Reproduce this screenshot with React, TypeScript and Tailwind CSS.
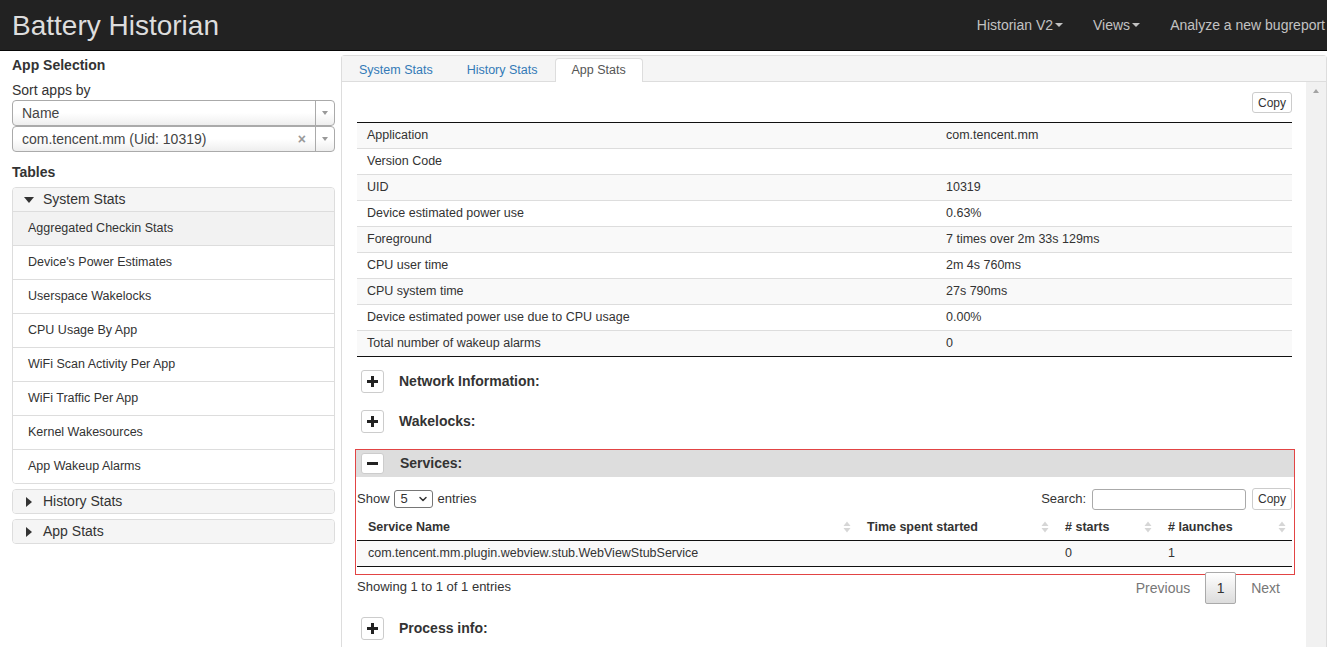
import { ChevronDown } from "lucide-react";

const appRows: [string, string][] = [
  ["Application", "com.tencent.mm"],
  ["Version Code", ""],
  ["UID", "10319"],
  ["Device estimated power use", "0.63%"],
  ["Foreground", "7 times over 2m 33s 129ms"],
  ["CPU user time", "2m 4s 760ms"],
  ["CPU system time", "27s 790ms"],
  ["Device estimated power use due to CPU usage", "0.00%"],
  ["Total number of wakeup alarms", "0"],
];

const systemTables = [
  "Aggregated Checkin Stats",
  "Device's Power Estimates",
  "Userspace Wakelocks",
  "CPU Usage By App",
  "WiFi Scan Activity Per App",
  "WiFi Traffic Per App",
  "Kernel Wakesources",
  "App Wakeup Alarms",
];

function Caret() {
  return (
    <span className="ml-[2px] inline-block h-0 w-0 border-x-[4px] border-t-[4px] border-b-0 border-x-transparent border-t-[#c2c2c2]" />
  );
}

function SortIcon() {
  return (
    <svg width="8" height="14" viewBox="0 0 8 14" className="shrink-0">
      <path d="M4 1.5 L7.5 6 L0.5 6 Z" fill="#d6d6d6" />
      <path d="M4 12.5 L7.5 8 L0.5 8 Z" fill="#d6d6d6" />
    </svg>
  );
}

function SelectBox({ value, clear }: { value: string; clear?: boolean }) {
  return (
    <div className="flex h-[26px] items-stretch rounded-[4px] border border-[#aaa] bg-linear-to-b from-white from-50% to-[#eeeeee] text-[14px]">
      <div className="flex flex-1 items-center pl-[9px] text-[#444]">{value}</div>
      {clear && (
        <div className="flex items-center pr-[9px] text-[14px] font-bold text-[#999]">×</div>
      )}
      <div className="flex w-[19px] items-center justify-center border-l border-[#aaa]">
        <span className="h-0 w-0 border-x-[3.5px] border-t-[4px] border-b-0 border-x-transparent border-t-[#999]" />
      </div>
    </div>
  );
}

function ToggleButton({ open, short }: { open?: boolean; short?: boolean }) {
  return (
    <div
      className={`flex w-[23px] shrink-0 items-center justify-center rounded-[3px] border border-[#ccc] bg-white ${
        short ? "h-[21px]" : "h-[23px]"
      }`}
    >
      <svg width="11" height="11" viewBox="0 0 11 11">
        <rect x="0" y="4" width="11" height="3" fill="#222" />
        {!open && <rect x="4" y="0" width="3" height="11" fill="#222" />}
      </svg>
    </div>
  );
}

function SidePanelHeader({ label, open }: { label: string; open?: boolean }) {
  return (
    <div className="flex h-[23px] items-center gap-[9px] bg-[#f5f5f5] pl-[11px] text-[14px]">
      <span className="flex w-[10px] justify-center">
        {open ? (
          <span className="h-0 w-0 border-x-[5px] border-t-[6px] border-b-0 border-x-transparent border-t-[#333]" />
        ) : (
          <span className="h-0 w-0 border-y-[5px] border-l-[6px] border-r-0 border-y-transparent border-l-[#333]" />
        )}
      </span>
      {label}
    </div>
  );
}

export default function App() {
  return (
    <div className="h-[647px] w-full overflow-hidden bg-white font-['Liberation_Sans',Arial,sans-serif] text-[#333]">
      {/* Navbar */}
      <nav className="flex h-[51px] items-center overflow-hidden border-b border-[#080808] bg-[#222]">
        <div className="pl-3 pt-[2px] text-[28px] leading-none text-[#dddddd]">Battery Historian</div>
        <ul className="-mr-[13px] ml-auto flex shrink-0 text-[14px] text-[#c2c2c2]">
          <li className="flex items-center px-[15px]">
            Historian V2
            <Caret />
          </li>
          <li className="flex items-center px-[15px]">
            Views
            <Caret />
          </li>
          <li className="flex items-center px-[15px]">Analyze a new bugreport</li>
        </ul>
      </nav>

      <div className="flex h-[596px]">
        {/* Sidebar */}
        <aside className="w-[341px] shrink-0 pl-3 pr-[6px] pt-1">
          <div className="text-[14px] font-bold leading-[20px]">App Selection</div>
          <div className="mt-[5px] text-[14px] leading-[20px]">Sort apps by</div>
          <SelectBox value="Name" />
          <SelectBox value="com.tencent.mm (Uid: 10319)" clear />
          <div className="mt-[10px] text-[14px] font-bold leading-[20px]">Tables</div>

          <div className="mt-[5px] overflow-hidden rounded-[4px] border border-[#ddd]">
            <SidePanelHeader label="System Stats" open />
            {systemTables.map((t, i) => (
              <div
                key={t}
                className={`flex h-[34px] items-center border-t border-[#ddd] pl-[15px] text-[12.5px] ${
                  i === 0 ? "bg-[#f2f2f2]" : "bg-white"
                }`}
              >
                {t}
              </div>
            ))}
          </div>
          <div className="mt-[5px] overflow-hidden rounded-[4px] border border-[#ddd]">
            <SidePanelHeader label="History Stats" />
          </div>
          <div className="mt-[5px] overflow-hidden rounded-[4px] border border-[#ddd]">
            <SidePanelHeader label="App Stats" />
          </div>
        </aside>

        {/* Main panel */}
        <main className="mt-1 flex min-w-0 flex-1 flex-col rounded-t-[4px] border border-b-0 border-[#ddd]">
          <div className="flex h-[26px] shrink-0 items-end border-b border-[#ddd] bg-[#f5f5f5] text-[12.5px]">
            <div className="flex h-[24px] items-center border border-transparent px-4 pt-[2px] text-[#337ab7]">System Stats</div>
            <div className="flex h-[24px] items-center border border-transparent px-4 pt-[2px] text-[#337ab7]">History Stats</div>
            <div className="-mb-px flex h-[24px] items-center rounded-t-[4px] border border-b-0 border-[#ddd] bg-white px-4 text-[#555]">
              App Stats
            </div>
          </div>

          <div className="flex min-h-0 flex-1">
            <div className="min-w-0 flex-1 overflow-hidden pl-[15px] pr-[14px] pt-[10px]">
              <div className="flex justify-end">
                <div className="flex h-[21px] w-[40px] items-center justify-center rounded-[3px] border border-[#ccc] bg-white text-[12px]">
                  Copy
                </div>
              </div>

              <div className="mt-[9px] border-t border-[#111] text-[12.5px]">
                {appRows.map(([k, v], i) => (
                  <div
                    key={k}
                    className={`flex h-[26px] items-center border-b ${
                      i === appRows.length - 1 ? "border-[#111]" : "border-[#ddd]"
                    } ${i % 2 === 0 ? "bg-[#f9f9f9]" : "bg-white"}`}
                  >
                    <div className="w-[579px] shrink-0 pl-[10px]">{k}</div>
                    <div className="pl-[10px]">{v}</div>
                  </div>
                ))}
              </div>

              <div className="mt-[13px] flex items-center gap-[15px] pl-[4px]">
                <ToggleButton />
                <span className="text-[14px] font-bold">Network Information:</span>
              </div>
              <div className="mt-[17px] flex items-center gap-[15px] pl-[4px]">
                <ToggleButton />
                <span className="text-[14px] font-bold">Wakelocks:</span>
              </div>

              {/* Services */}
              <div className="-ml-[2px] -mr-[3px] mt-[16px] border border-[#e24444] pb-[7px]">
                <div className="flex h-[27px] items-center gap-[16px] bg-[#dddddd] pl-[5px]">
                  <ToggleButton open short />
                  <span className="text-[14px] font-bold">Services:</span>
                </div>
                <div className="pl-px pr-[2px]">
                  <div className="mt-[11px] flex h-[22px] items-center text-[13px]">
                    <span>Show</span>
                    <div className="ml-[4px] flex h-[18px] w-[39px] items-center justify-between rounded-[3px] border border-[#767676] pl-[6px] pr-[3px]">
                      <span>5</span>
                      <ChevronDown size={12} strokeWidth={3} />
                    </div>
                    <span className="ml-[5px]">entries</span>
                    <span className="ml-auto">Search:</span>
                    <div className="ml-[6px] h-[21px] w-[154px] rounded-[3px] border border-[#aaa] bg-white" />
                    <div className="ml-[6px] flex h-[22px] w-[40px] items-center justify-center rounded-[3px] border border-[#ccc] bg-white text-[12px]">
                      Copy
                    </div>
                  </div>

                  <div className="mt-[4px] flex h-[27px] items-center border-b border-[#111] text-[12.5px] font-bold">
                    <div className="flex w-[500px] items-center justify-between pl-[11px] pr-[6px]">
                      Service Name
                      <SortIcon />
                    </div>
                    <div className="flex w-[198px] items-center justify-between pl-[10px] pr-[6px]">
                      Time spent started
                      <SortIcon />
                    </div>
                    <div className="flex w-[103px] items-center justify-between pl-[10px] pr-[6px]">
                      # starts
                      <SortIcon />
                    </div>
                    <div className="flex flex-1 items-center justify-between pl-[10px] pr-[6px]">
                      # launches
                      <SortIcon />
                    </div>
                  </div>
                  <div className="flex h-[26px] items-center border-b border-[#111] bg-[#f9f9f9] text-[12.5px]">
                    <div className="w-[500px] pl-[11px]">com.tencent.mm.plugin.webview.stub.WebViewStubService</div>
                    <div className="w-[198px] pl-[10px]"></div>
                    <div className="w-[103px] pl-[10px]">0</div>
                    <div className="flex-1 pl-[10px]">1</div>
                  </div>
                </div>
              </div>

              <div className="flex items-start justify-between">
                <div className="mt-[2px] text-[13px] leading-[20px]">Showing 1 to 1 of 1 entries</div>
                <div className="-mt-[3px] flex h-[32px] items-center pr-[12px] text-[14px] text-[#777]">
                  <span>Previous</span>
                  <div className="mx-[15px] flex h-[32px] w-[31px] items-center justify-center rounded-[2px] border border-[#aaa] bg-linear-to-b from-white to-[#dcdcdc] text-[#333]">
                    1
                  </div>
                  <span>Next</span>
                </div>
              </div>

              <div className="mt-[13px] flex items-center gap-[15px] pl-[4px]">
                <ToggleButton />
                <span className="text-[14px] font-bold">Process info:</span>
              </div>
            </div>

            {/* Scrollbar */}
            <div className="flex w-[20px] shrink-0 justify-center bg-[#f1f1f1] pt-[7px]">
              <span className="h-0 w-0 border-x-[3.5px] border-b-[4px] border-t-0 border-x-transparent border-b-[#a3a3a3]" />
            </div>
          </div>
        </main>
      </div>
    </div>
  );
}
